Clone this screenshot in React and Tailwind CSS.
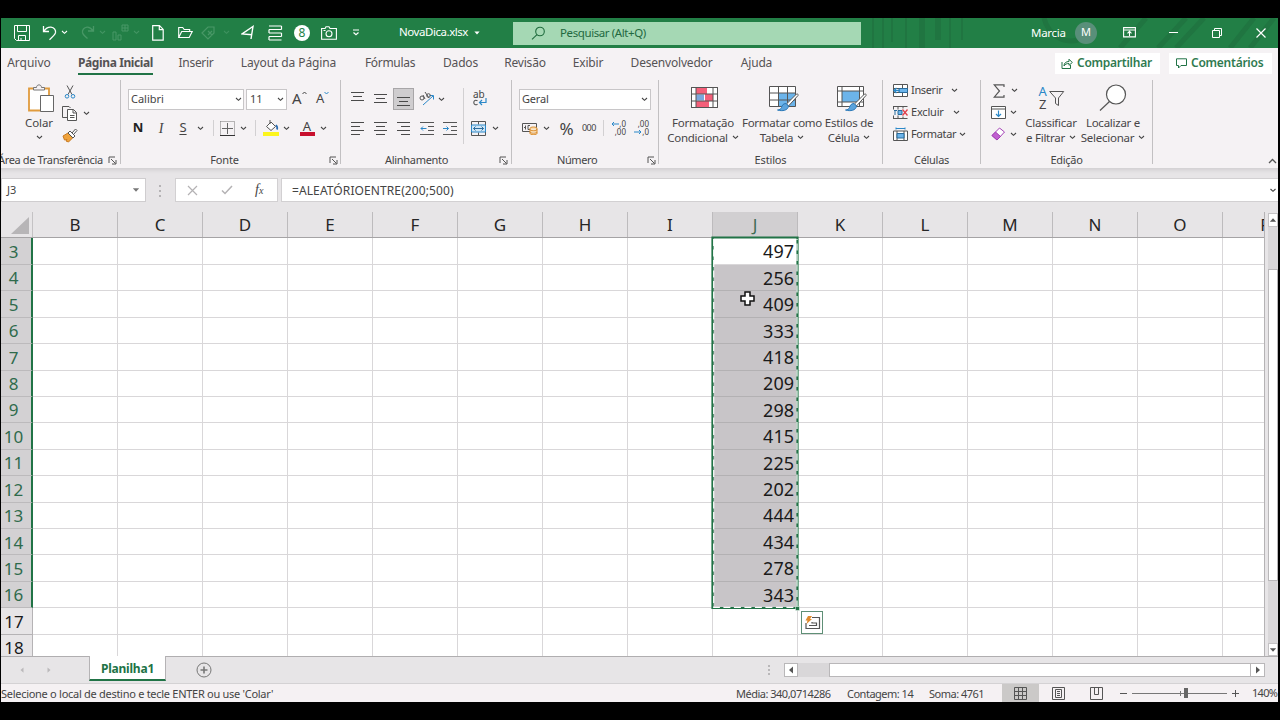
import React from "react";

const Chev = ({ className = "", w = 7, color = "#444" }) => (
  <svg width={w} height="5" viewBox="0 0 7 5" fill="none" stroke={color} strokeWidth="1.1" className={"shrink-0 " + className}>
    <path d="M1 1l2.5 2.3L6 1" />
  </svg>
);

const Tri = ({ d, color = "#555", className = "" }) => (
  <svg width="8" height="8" viewBox="0 0 8 8" fill={color} className={"shrink-0 " + className}>
    <path d={d} />
  </svg>
);
const DOWN = "M0.5 2h7L4 6z";
const UP = "M0.5 6h7L4 2z";
const LEFT = "M6 0.5v7L2 4z";
const RIGHT = "M2 0.5v7L6 4z";

const Ic = ({ w = 16, h = 16, vw, vh, children, className = "", stroke = "#555", sw = 1 }) => (
  <svg width={w} height={h} viewBox={`0 0 ${vw || w} ${vh || h}`} fill="none" stroke={stroke} strokeWidth={sw} className={"shrink-0 " + className}>
    {children}
  </svg>
);

const Launcher = ({ className = "" }) => (
  <Ic w={9} h={9} className={className} stroke="#555">
    <path d="M1 7V1h6M3 3l4.500 4.500M8 4v4H4" />
  </Ic>
);

const VSep = ({ className = "" }) => <div className={"w-px shrink-0 bg-[#d2d0d2] " + className} />;
const GroupSep = () => <div className="h-[84px] w-px shrink-0 bg-[#c2c0c2]" />;

function TitleBar() {
  return (
    <div className="relative flex h-[30px] shrink-0 items-center overflow-hidden bg-[#227f46] pb-[1px]">
      <svg width="420" height="30" className="absolute right-0 top-0" fill="none" stroke="#1d6b3c" strokeOpacity="0.5">
        <path strokeWidth="2" d="M15 0v30M25 0v30M34 0v24M48 0v30M92 0v30M104 0v22" />
        <path strokeWidth="6" d="M64 0v30M80 0v22" />
        <path strokeWidth="5" d="M186 0c4 16 18 26 34 22M262 30l26-30M300 30l28-30M318 30l28-30M372 30l24-30M392 30l24-30" />
      </svg>
      <Ic className="ml-[13px]" stroke="#fff">
        <path d="M.5 .5h15v15H2.500L.5 13.500zM3.500 .5v6h9v-6M4.500 15.500v-5h7v5M7 13v2.500" />
      </Ic>
      <Ic w={15} h={16} className="ml-[12px]" stroke="#fff" sw={1.3}>
        <path d="M1.500 1v5.500H7M1.800 6.300C4 3 6.500 2 9 2.200c3.300.3 5 3 4.500 5.500-.5 2.200-2.500 4-6 7" />
      </Ic>
      <Chev color="#fff" className="ml-[4px]" />
      <Ic w={14} h={15} className="ml-[13px] opacity-30" stroke="#9fd0b0" sw={1.3}>
        <path d="M12.500 1v5H7M12.200 6C10 3 8 2 6 2.200 3 2.500 1 5 1.500 7.500c.5 2 2.500 4 5 6" />
      </Ic>
      <Chev color="#5aa377" className="ml-[4px] opacity-60" />
      <Ic w={17} h={17} className="ml-[6px] opacity-30" stroke="#9fd0b0">
        <path d="M1 8v8h3V8zM6 11v5h3v-5zM10 1h6v6h-6zM10 4h6M13 1v6" />
      </Ic>
      <Chev color="#5aa377" className="ml-[4px] opacity-60" />
      <Ic w={12} h={16} className="ml-[12px]" stroke="#fff" sw={1.2}>
        <path d="M.7 .7h6.800l3.700 3.700v10.800H.7zM7.300 .7v4h4" />
      </Ic>
      <Ic w={15} h={13} className="ml-[14px]" stroke="#fff" sw={1.1}>
        <path d="M.7 11.500V1.500h4l1.500 2h5.500v2M.7 11.500l3-6h10.500l-3 6z" />
      </Ic>
      <Ic w={15} h={14} className="ml-[8px] opacity-30" stroke="#9fd0b0" sw={1.2}>
        <path d="M1 7l6-6h6v6l-6 6zM7 5l4 4M11 5L7 9" />
      </Ic>
      <Chev color="#5aa377" className="ml-[7px] opacity-50" />
      <Ic w={14} h={15} className="ml-[11px]" stroke="#fff" sw={1.4}>
        <path d="M10 14l2-12.500L1 9l10 .8" />
      </Ic>
      <Ic w={16} h={16} className="ml-[12px]" stroke="#fff" sw={1.2}>
        <path d="M2 1h12.500M2 4.500h12.500M2 8h12.500M2 11.500h12.500M2 15h12.500M14.500 1v3.500M2 4.500V8M14.500 8v3.500M2 11.500V15" />
      </Ic>
      <div className="ml-[11px] flex size-[16px] shrink-0 items-center justify-center rounded-full bg-white text-[12px] leading-none text-[#227f46]">8</div>
      <Ic w={16} h={14} className="ml-[11px]" stroke="#fff" sw={1.1}>
        <path d="M.6 2.500h3.500L5 .8h3l1 1.700h6.400v10.700H.6zM2.500 4.500h2" />
        <circle cx="8" cy="7.700" r="3" />
      </Ic>
      <Ic w={8} h={7} className="ml-[15px]" stroke="#fff" sw={1.2}>
        <path d="M1 1h6M1.500 3.500L4 5.700l2.500-2.200" />
      </Ic>
      <div className="ml-[39px] w-[70px] shrink-0 whitespace-nowrap pb-[2px] text-[11.5px] tracking-[-0.45px] text-white">NovaDica.xlsx</div>
      <Tri d={DOWN} color="#fff" className="ml-[4px] scale-75" />
      <div className="ml-[32px] mt-[1px] flex h-[23px] w-[348px] shrink-0 items-center bg-[#a5d8b4]">
        <Ic w={15} h={14} className="ml-[18px]" stroke="#1f6b3d" sw={1.1}>
          <circle cx="9" cy="5.500" r="4.300" />
          <path d="M6 8.700L1 13.300" />
        </Ic>
        <span className="ml-[14px] whitespace-nowrap text-[11.5px] tracking-[-0.4px] text-[#23693f]">Pesquisar (Alt+Q)</span>
      </div>
      <div className="relative ml-[170px] w-[35px] shrink-0 whitespace-nowrap text-[11.5px] tracking-[-0.3px] text-white">Marcia</div>
      <div className="relative ml-[9px] flex size-[22px] shrink-0 items-center justify-center rounded-full bg-[#598f7a] text-[11px] text-white">M</div>
      <Ic w={13} h={11} className="relative ml-[26px]" stroke="#fff" sw={1.1}>
        <path d="M.6 .6h11.800v9.300H.6zM.6 3h11.800M6.500 9V4.500M4.500 6.300l2-2 2 2" />
      </Ic>
      <div className="relative ml-[33px] h-px w-[9px] bg-white" />
      <Ic w={10} h={10} className="relative ml-[34px]" stroke="#fff">
        <path d="M.5 2.500h7v7h-7zM2.500 2.500v-2h7v7h-2" />
      </Ic>
      <Ic w={10} h={10} className="relative ml-[34px]" stroke="#fff" sw={1.2}>
        <path d="M.5 .5l9 9M9.500 .5l-9 9" />
      </Ic>
    </div>
  );
}

function MenuTabs() {
  const tab = "flex shrink-0 justify-center whitespace-nowrap";
  return (
    <div className="flex h-[32px] shrink-0 items-center bg-[#f5f2f4] pb-[2px] text-[12px] leading-[16px] text-[#555355]">
      <div className={tab + " ml-[7px] w-[42px]"}>Arquivo</div>
      <div className={tab + " relative ml-[28px] w-[75px] font-bold tracking-[-0.4px] after:absolute after:inset-x-0 after:top-[18px] after:h-[2px] after:bg-[#217346]"}>Página Inicial</div>
      <div className={tab + " ml-[26px] w-[34px] tracking-[-0.3px]"}>Inserir</div>
      <div className={tab + " ml-[28px] w-[95px] tracking-[-0.1px]"}>Layout da Página</div>
      <div className={tab + " ml-[29px] w-[50px] tracking-[-0.3px]"}>Fórmulas</div>
      <div className={tab + " ml-[28px] w-[35px] tracking-[-0.2px]"}>Dados</div>
      <div className={tab + " ml-[26px] w-[42px] tracking-[-0.2px]"}>Revisão</div>
      <div className={tab + " ml-[27px] w-[30px] tracking-[-0.2px]"}>Exibir</div>
      <div className={tab + " ml-[27px] w-[83px] tracking-[-0.2px]"}>Desenvolvedor</div>
      <div className={tab + " ml-[28px] w-[31px] tracking-[-0.2px]"}>Ajuda</div>
      <div className="ml-[283px] flex h-[21px] w-[105px] shrink-0 items-center bg-white font-semibold text-[#2f7a50]">
        <Ic w={12} h={11} className="ml-[6px]" stroke="#217346">
          <path d="M1 4v6.500h8.500V7M3 8c0-3 2-4.500 5-4.500V1.200L11.300 4.500 8 7.300V5.500C5.500 5.500 4 6.300 3 8z" />
        </Ic>
        <span className="ml-[4px] whitespace-nowrap tracking-[-0.25px]">Compartilhar</span>
      </div>
      <div className="ml-[9px] flex h-[21px] w-[103px] shrink-0 items-center bg-white font-semibold text-[#2f7a50]">
        <Ic w={11} h={11} className="ml-[7px]" stroke="#217346">
          <path d="M.5 .8h10v6.700H5L2.500 10V7.500h-2z" />
        </Ic>
        <span className="ml-[4px] whitespace-nowrap tracking-[-0.25px]">Comentários</span>
      </div>
    </div>
  );
}

const Lines = ({ rows, w = 14, h = 14 }) => (
  <Ic w={w} h={h} stroke="#4a4a4a">
    {rows.map(([x, y, l], i) => (
      <path key={i} d={`M${x} ${y + 0.5}h${l}`} />
    ))}
  </Ic>
);

const Brush = () => (
  <g>
    <path d="M27.500 8L17.500 18l2 2L29 9.500c.5-1-.5-2-1.500-1.500z" fill="#fff" stroke="#555" />
    <path d="M17 17.500c-3 0-4 2-4.500 4-.5 1.500-2 2.500-4 2.500 5 1.500 10.500.5 11-4z" fill="#5ba3dc" stroke="#2b79b8" />
  </g>
);

function BigButton({ className, icon, a, b }) {
  return (
    <div className={"flex shrink-0 flex-col items-center whitespace-nowrap text-[11.5px] leading-[15px] tracking-[-0.25px] text-[#484648] " + className}>
      <div className="flex h-[35px] shrink-0 items-center justify-center">{icon}</div>
      <div>{a}</div>
      <div className="flex items-center">
        {b}
        <Chev className="ml-[4px]" />
      </div>
    </div>
  );
}

const label = "flex h-[16px] items-center justify-center whitespace-nowrap text-[11px] leading-[16px] tracking-[-0.15px] text-[#444]";

function Ribbon() {
  return (
    <div className="flex h-[88px] shrink-0 bg-[#f5f2f4] text-[12px] text-[#444]">
      {/* Clipboard */}
      <div className="w-[119px] shrink-0 overflow-hidden">
        <div className="flex h-[72px]">
          <div className="ml-[18px] flex w-[40px] shrink-0 flex-col items-center">
            <Ic w={28} h={30} className="ml-[3px] mt-[4px]">
              <path d="M2 4.500h20v22H2z" fill="#fff" stroke="#e09b3d" strokeWidth="1.800" />
              <path d="M6.500 6V3.500h3C9.500 0 14.500 0 14.500 3.500h3V6z" fill="#f5f2f4" stroke="#777" />
              <path d="M13.500 11.500h13v16h-13z" fill="#fff" stroke="#666" />
            </Ic>
            <div className="mt-[1px] text-[11.5px] leading-[16px] tracking-[-0.1px]">Colar</div>
            <Chev className="mt-[4px]" />
          </div>
          <div className="flex flex-col">
            <div className="flex h-[22px] items-center">
              <Ic w={12} h={14} className="ml-[5px] mt-[2px]">
                <path d="M3 .5l5 9M9 .5l-5 9" />
                <circle cx="3" cy="11.300" r="1.800" stroke="#2b88c8" />
                <circle cx="9" cy="11.300" r="1.800" stroke="#2b88c8" />
              </Ic>
            </div>
            <div className="flex h-[22px] items-center">
              <Ic w={16} h={15} className="ml-[3px]">
                <path d="M5 11.500H.5V.5H7l1.500 1.500" />
                <path d="M5.500 3.500h6l3 3v8h-9zM11 3.500v3.500h3.500M8 9.500h4.500M8 11.500h4.500" fill="#fff" />
              </Ic>
              <Chev className="ml-[5px]" />
            </div>
            <div className="flex h-[22px] items-center">
              <Ic w={16} h={15} className="ml-[3px]">
                <path d="M1 8l5-3 5 4.500-4.500 4.500L4 13l1-1.500-2.500.5z" fill="#f0a33c" stroke="#c97a20" />
                <path d="M6 5l2-2 5 5-2 2zM10 5l3.500-4 1.500 1.500-3.500 4" fill="#fff" />
              </Ic>
            </div>
          </div>
        </div>
        <div className={label + " justify-start"}>
          <span className="ml-[-3px] w-[104px] shrink-0 tracking-[-0.35px]">Área de Transferência</span>
          <Launcher className="ml-[6px]" />
        </div>
      </div>
      <GroupSep />

      {/* Font */}
      <div className="w-[219px] shrink-0">
        <div className="flex h-[72px] flex-col">
          <div className="mt-[8px] flex h-[22px] items-center">
            <div className="ml-[7px] flex h-[21px] w-[116px] shrink-0 items-center justify-between border border-[#c8c6c8] bg-white pl-[2px] pr-[1px] text-[11px]">
              Calibri <Chev />
            </div>
            <div className="ml-[2px] flex h-[21px] w-[41px] shrink-0 items-center justify-between border border-[#c8c6c8] bg-white pl-[3px] pr-[2px] text-[11px]">
              11 <Chev />
            </div>
            <div className="ml-[5px] mt-[-3px] flex w-[16px] items-start text-[15px] leading-[18px]">
              A<Ic w={5} h={4} className="mt-[2px]" stroke="#444"><path d="M.5 3l2-2 2 2" /></Ic>
            </div>
            <div className="ml-[8px] mt-[-3px] flex w-[16px] items-start text-[13px] leading-[18px]">
              A<Ic w={5} h={4} className="mt-[2px]" stroke="#2b88c8"><path d="M.5 1l2 2 2-2" /></Ic>
            </div>
          </div>
          <div className="mt-[7px] flex h-[22px] items-center text-[13px]">
            <div className="ml-[9px] w-[16px] text-center font-bold text-[#222]">N</div>
            <div className="ml-[7px] w-[16px] text-center font-['Liberation_Serif',serif] text-[14px] italic">I</div>
            <div className="ml-[6px] w-[16px] text-center underline underline-offset-2">S</div>
            <Chev className="ml-[6px]" />
            <VSep className="ml-[9px] h-[16px]" />
            <Ic w={15} h={15} className="ml-[6px]" stroke="#777">
              <path d="M.5 .5h14v14M.5 .5v14" strokeDasharray="1 1" />
              <path d="M7.500 2v11M2 7.500h11" stroke="#666" />
              <path d="M0 14.500h15" stroke="#333" />
            </Ic>
            <Chev className="ml-[5px]" />
            <VSep className="ml-[8px] h-[16px]" />
            <Ic w={16} h={16} className="ml-[7px]">
              <path d="M3.500 6.500L8 2l4.500 4.500L8 10.500zM7 0v4" fill="#fff" />
              <path d="M13 5c1.500 2 1.500 3.500.8 4.500" stroke="#2b6cb0" strokeWidth="1.800" />
              <path d="M0 12h16v4H0z" fill="#fcf51c" stroke="none" />
            </Ic>
            <Chev className="ml-[4px]" />
            <div className="ml-[9px] flex w-[16px] flex-col items-center">
              <span className="text-[13px] leading-[12px]">A</span>
              <span className="h-[4px] w-[15px] bg-[#c8102e]" />
            </div>
            <Chev className="ml-[5px]" />
          </div>
        </div>
        <div className={label}>
          <span className="ml-[86px] w-[30px] text-center">Fonte</span>
          <Launcher className="ml-[89px]" />
        </div>
      </div>
      <GroupSep />

      {/* Alignment */}
      <div className="w-[170px] shrink-0">
        <div className="flex h-[72px]">
          <div className="flex w-[122px] shrink-0 flex-col">
            <div className="mt-[8px] flex h-[22px] items-center">
              <div className="ml-[10px] mt-[-4px] flex"><Lines h={16} rows={[[0, 3, 13], [2, 7, 9], [0, 11, 13]]} /></div>
              <div className="ml-[9px] mt-[-4px] flex"><Lines h={16} rows={[[0, 5, 13], [2, 9, 9], [0, 13, 13]]} /></div>
              <div className="ml-[5px] flex h-[22px] w-[21px] shrink-0 items-center justify-center border border-[#a8a6a8] bg-[#cfcdcf]">
                <Lines h={16} rows={[[0, 6, 13], [2, 10, 9], [0, 14, 13]]} />
              </div>
              <Ic w={16} h={16} className="ml-[5px]">
                <path d="M4 14L14 5M10.500 4.500H14.500V8.500" stroke="#2b88c8" />
                <circle cx="3" cy="7" r="2" />
                <path d="M4 4l2 4M6 1l4 6" />
                <circle cx="9.500" cy="4.500" r="1.800" />
              </Ic>
              <Chev className="ml-[3px]" />
            </div>
            <div className="mt-[7px] flex h-[22px] items-center gap-[9px] pl-[10px]">
              <Lines rows={[[0, 1, 13], [0, 5, 9], [0, 9, 13], [0, 13, 9]]} />
              <Lines rows={[[0, 1, 13], [2, 5, 9], [0, 9, 13], [2, 13, 9]]} />
              <Lines rows={[[0, 1, 13], [4, 5, 9], [0, 9, 13], [4, 13, 9]]} />
              <Ic w={14} h={14}>
                <path d="M0 1.500h14M8 5.500h6M8 9.500h6M0 13.500h14" />
                <path d="M6.500 7.500H1M3 5.500l-2 2 2 2" stroke="#2b88c8" />
              </Ic>
              <Ic w={14} h={14}>
                <path d="M0 1.500h14M8 5.500h6M8 9.500h6M0 13.500h14" />
                <path d="M0 7.500h5.500M3.500 5.500l2 2-2 2" stroke="#2b88c8" />
              </Ic>
            </div>
          </div>
          <VSep className="mt-[8px] h-[56px]" />
          <div className="flex flex-col">
            <div className="mt-[8px] flex h-[22px] items-center">
              <div className="ml-[9px] mt-[-2px] w-[15px] text-[10px] leading-[8px]">
                <div className="h-[8px]">ab</div>
                <div className="flex h-[8px] items-center">
                  <Ic w={5} h={8} sw={1.1}><path d="M4.500 2.800C2.500 1.500.8 2.500.8 4.500s1.700 3 3.700 1.700" /></Ic>
                  <Ic w={9} h={8} stroke="#2b88c8" sw={1.2}><path d="M8 0v4.500H1.500M4 2L1.500 4.500 4 7" /></Ic>
                </div>
              </div>
            </div>
            <div className="mt-[7px] flex h-[22px] items-center">
              <Ic w={15} h={15} className="ml-[7px]">
                <path d="M.5 .5h14v14H.5zM7.500 .5v3M7.500 11.500v3" />
                <path d="M.5 4h14v7H.5z" fill="#cfe6f7" stroke="#2b88c8" />
                <path d="M2.500 7.500h10M4.500 5.500l-2 2 2 2M10.500 5.500l2 2-2 2" stroke="#2b6c9c" />
              </Ic>
              <Chev className="ml-[6px]" />
            </div>
          </div>
        </div>
        <div className={label + " justify-start"}>
          <span className="ml-[44px] w-[63px] text-center tracking-[-0.3px]">Alinhamento</span>
          <Launcher className="ml-[51px]" />
        </div>
      </div>
      <GroupSep />

      {/* Number */}
      <div className="w-[146px] shrink-0">
        <div className="flex h-[72px] flex-col">
          <div className="mt-[8px] flex h-[22px] items-center">
            <div className="ml-[7px] flex h-[21px] w-[132px] shrink-0 items-center justify-between border border-[#c8c6c8] bg-white pl-[2px] pr-[2px] text-[11px] tracking-[-0.2px]">
              Geral <Chev />
            </div>
          </div>
          <div className="mt-[7px] flex h-[22px] items-center">
            <Ic w={16} h={14} className="ml-[10px]">
              <path d="M.5 2.500h14v8H.5z" />
              <path d="M3.500 4.500v4M2 6.500h1M8 4.500H6v4h2" />
              <path d="M8 7.500c0-2 7-2 7 0v5c0 1.500-7 1.500-7 0zM8 8.500c0 1.500 7 1.500 7 0M8 11c0 1.500 7 1.500 7 0" fill="#fbdcae" stroke="#d98a28" />
            </Ic>
            <Chev className="ml-[5px]" />
            <div className="ml-[8px] w-[16px] text-center text-[17px] leading-none tracking-[-1px]">%</div>
            <div className="ml-[6px] w-[18px] text-center text-[9px] tracking-[-0.4px]">000</div>
            <VSep className="ml-[5px] h-[16px]" />
            <div className="ml-[6px] flex w-[16px] flex-col items-end text-[8px] leading-[8px]">
              <div className="flex h-[8px] items-center">
                <Ic w={8} h={6} stroke="#2b88c8"><path d="M8 3H1M3 1L1 3l2 2" /></Ic>,0
              </div>
              <div className="h-[8px]">,00</div>
            </div>
            <div className="ml-[7px] flex w-[16px] flex-col items-end text-[8px] leading-[8px]">
              <div className="h-[8px]">,00</div>
              <div className="flex h-[8px] items-center">
                <Ic w={8} h={6} stroke="#2b88c8"><path d="M0 3h7M5 1l2 2-2 2" /></Ic>,0
              </div>
            </div>
          </div>
        </div>
        <div className={label + " justify-start"}>
          <span className="ml-[45px] w-[40px] text-center tracking-[-0.4px]">Número</span>
          <Launcher className="ml-[50px]" />
        </div>
      </div>
      <GroupSep />

      {/* Styles */}
      <div className="w-[223px] shrink-0">
        <div className="flex h-[72px]">
          <BigButton
            className="ml-[9px] w-[70px]"
            a="Formatação"
            b="Condicional"
            icon={
              <Ic w={28} h={22} className="ml-[3px]">
                <path d="M.5 .5h26v20H.5z" fill="#fff" />
                <path d="M5 .5h11v6.500H5zM14 7h8v7h-8zM5 14h13v6.500H5z" fill="#f4607a" stroke="none" />
                <path d="M5 7.500h8v6H5z" fill="#7ba7dd" stroke="none" />
                <path d="M.5 .5h26v20H.5zM.5 7h26M.5 14h26M5 .5v20M22 .5v20" />
              </Ic>
            }
          />
          <BigButton
            className="ml-[5px] w-[78px] tracking-[-0.3px]"
            a="Formatar como"
            b="Tabela"
            icon={
              <Ic w={30} h={26} className="ml-[4px] mt-[3px]">
                <path d="M.5 .5h26v20H.5z" fill="#fff" stroke="none" />
                <path d="M9.500 7h17v13.500h-17z" fill="#6cb4ea" stroke="none" />
                <path d="M.5 .5h26v20H.5zM.5 7h26M.5 14h26M9.500 .5v20M18.500 .5v20" />
                <Brush />
              </Ic>
            }
          />
          <BigButton
            className="ml-[5px] w-[46px]"
            a="Estilos de"
            b="Célula"
            icon={
              <Ic w={30} h={26} className="ml-[5px] mt-[3px]">
                <path d="M.5 .5h26v20H.5z" fill="#fff" stroke="none" />
                <path d="M5 5h18v11H5z" fill="#6cb4ea" stroke="none" />
                <path d="M.5 .5h26v20H.5zM.5 5h26M.5 16h26M5 .5v20M22.500 .5v20" />
                <Brush />
              </Ic>
            }
          />
        </div>
        <div className={label}>
          <span>Estilos</span>
        </div>
      </div>
      <GroupSep />

      {/* Cells */}
      <div className="w-[97px] shrink-0">
        <div className="mt-[-1px] flex h-[73px] flex-col text-[11px] tracking-[-0.2px]">
          <div className="flex h-[22px] items-center">
            <Ic w={15} h={13} className="ml-[10px]">
              <path d="M.5 .5h14v12H.5zM.5 4.500h14M.5 8.500h14M9.500 .5v12" fill="#fff" />
              <path d="M6 4.500h8.500v4H6z" fill="#6cb4ea" stroke="#2b6c9c" />
              <path d="M7 6.500H1M3.500 4L1 6.500 3.500 9" stroke="#2b88c8" strokeWidth="1.300" />
            </Ic>
            <span className="ml-[3px] w-[32px] whitespace-nowrap tracking-[-0.35px]">Inserir</span>
            <Chev className="ml-[8px]" />
          </div>
          <div className="flex h-[22px] items-center">
            <Ic w={15} h={13} className="ml-[10px]">
              <path d="M0 .5h14.500M0 12.500h14.500M.5 .5v3M.5 9.500v3M5 .5v3M5 9.500v3M10 .5v2M10 10.500v2" />
              <path d="M1 4.500h3M2 4v5M5 4.500h4v4H5z" fill="#6cb4ea" stroke="#2b6c9c" />
              <path d="M9.500 3.500l5 6M14.500 3.500l-5 6" stroke="#e0404c" strokeWidth="1.300" />
            </Ic>
            <span className="ml-[3px] w-[34px] whitespace-nowrap">Excluir</span>
            <Chev className="ml-[8px]" />
          </div>
          <div className="flex h-[22px] items-center">
            <Ic w={15} h={14} className="ml-[10px]">
              <path d="M3 .5v2M12 .5v2M3 1.500h9" stroke="#2b88c8" />
              <path d="M.5 4h14v9.500H.5zM4 4v9.500M11 4v9.500" fill="#fff" />
              <path d="M4 6.500h7v4.500H4z" fill="#6cb4ea" stroke="#2b6c9c" />
            </Ic>
            <span className="ml-[3px] w-[45px] whitespace-nowrap tracking-[-0.35px]">Formatar</span>
            <Chev className="ml-[3px]" />
          </div>
        </div>
        <div className={label}>
          <span className="tracking-[-0.3px]">Células</span>
        </div>
      </div>
      <GroupSep />

      {/* Editing */}
      <div className="w-[171px] shrink-0">
        <div className="flex h-[72px]">
          <div className="flex w-[40px] shrink-0 flex-col">
            <div className="flex h-[21px] items-center">
              <Ic w={12} h={14} className="ml-[12px]" sw={1.2}><path d="M11 3V.8H1.200L6.500 7l-5.300 6.200H11V11" /></Ic>
              <Chev className="ml-[6px]" />
            </div>
            <div className="flex h-[22px] items-center">
              <Ic w={15} h={13} className="ml-[10px]">
                <path d="M.5 .5h14v12H.5zM.5 3h14" fill="#fff" />
                <path d="M7.500 4.500v6M5 8l2.500 2.500L10 8" stroke="#2b88c8" strokeWidth="1.200" />
              </Ic>
              <Chev className="ml-[4px]" />
            </div>
            <div className="flex h-[22px] items-center">
              <Ic w={15} h={14} className="ml-[10px]">
                <path d="M1 8.500L8.500 1l5 4-7.500 8z" fill="#fff" stroke="#a33fb5" />
                <path d="M1 8.500l3.500-3.500 5 4.500L6 13z" fill="#c060d0" stroke="#a33fb5" />
              </Ic>
              <Chev className="ml-[4px]" />
            </div>
          </div>
          <BigButton
            className="ml-[4px] w-[52px]"
            a="Classificar"
            b="e Filtrar"
            icon={
              <div className="flex items-start">
                <div className="flex w-[10px] flex-col items-center text-[13px] leading-[13px]">
                  <span className="text-[#2b88c8]">A</span>
                  <span>Z</span>
                </div>
                <Ic w={16} h={17} className="ml-[1px] mt-[5px]"><path d="M.7 1.500h14L9.500 8v7.500l-3-2V8z" /></Ic>
              </div>
            }
          />
          <BigButton
            className="ml-[6px] w-[60px]"
            a="Localizar e"
            b="Selecionar"
            icon={
              <Ic w={28} h={28} sw={1.2}>
                <circle cx="17" cy="10.500" r="9.500" fill="#fff" />
                <path d="M10.500 17.500L1 26.500" />
              </Ic>
            }
          />
        </div>
        <div className={label}>
          <span className="tracking-[-0.3px]">Edição</span>
        </div>
      </div>
      <GroupSep />
      <div className="flex grow items-end justify-end pb-[4px] pr-[1px]">
        <Ic w={9} h={6} sw={1.3}><path d="M1 5l3.500-3.500L8 5" /></Ic>
      </div>
    </div>
  );
}

function FormulaBar() {
  return (
    <div className="flex h-[44px] shrink-0 items-start bg-[#e7e5e7] shadow-[inset_0_4px_4px_-2px_#cfcdcf]">
      <div className="mt-[10px] flex h-[24px] w-[145px] shrink-0 items-center justify-between border border-[#cfcdcf] bg-white pl-[5px] pr-[5px] text-[11px] text-[#444]">
        J3 <Tri d={DOWN} color="#777" className="scale-90" />
      </div>
      <div className="ml-[13px] mt-[17px] flex w-[2px] flex-col gap-[3px]">
        <i className="size-[2px] bg-[#b5b3b5]" />
        <i className="size-[2px] bg-[#b5b3b5]" />
        <i className="size-[2px] bg-[#b5b3b5]" />
      </div>
      <div className="ml-[14px] mt-[10px] flex h-[24px] w-[103px] shrink-0 items-center border border-[#d2d0d2] bg-white">
        <Ic w={11} h={11} className="ml-[11px]" stroke="#b4b2b4" sw={1.2}><path d="M1 1l9 9M10 1l-9 9" /></Ic>
        <Ic w={12} h={10} className="ml-[23px]" stroke="#b4b2b4" sw={1.5}><path d="M1 5.500L4 8.500 11 1" /></Ic>
        <span className="ml-[22px] font-['Liberation_Serif',serif] text-[14px] italic leading-none text-[#444]">
          f<span className="text-[10px]">x</span>
        </span>
      </div>
      <div className="ml-[3px] mt-[10px] flex h-[24px] grow items-center justify-between border border-r-0 border-[#d2d0d2] bg-white pl-[10px] text-[12px] text-[#444]">
        <span className="whitespace-nowrap pt-[1px] tracking-[0.1px]">=ALEATÓRIOENTRE(200;500)</span>
        <Chev className="mr-[1px]" w={8} />
      </div>
    </div>
  );
}

const COLS = ["B", "C", "D", "E", "F", "G", "H", "I", "J", "K", "L", "M", "N", "O"];
const VALUES = [497, 256, 409, 333, 418, 209, 298, 415, 225, 202, 444, 434, 278, 343];
const ROWS = Array.from({ length: 16 }, (_, i) => i + 3);

function Sheet() {
  return (
    <div className="flex h-[444px] shrink-0 bg-[#e7e5e7]">
      <div className="relative h-[444px] w-[1264px] shrink-0 overflow-hidden border-r border-[#b5b3b5]">
        <div className="flex h-[26px] border-b border-[#a5a3a5] text-[17px] text-[#262626]">
          <div className="flex w-[32px] shrink-0 items-end justify-end border-r border-[#c4c2c4] pb-[3px] pr-[3px]">
            <svg width="18" height="17" fill="#b7b5b7"><path d="M18 0v17H0z" /></svg>
          </div>
          {COLS.map((c) => (
            <div
              key={c}
              className={"flex w-[85px] shrink-0 items-center justify-center border-r border-[#bdbbbd] " + (c === "J" ? "bg-[#d1cfd1] text-[#3f6b54]" : "")}
            >
              {c}
            </div>
          ))}
          <div className="flex w-[85px] shrink-0 items-center justify-center">P</div>
        </div>
        {ROWS.map((r, i) => (
          <div key={r} className={"flex text-[18px] text-[#1a1a1a] " + (i === 0 ? "h-[27px]" : "h-[26.42px]")}>
            <div
              className={
                "flex w-[32px] shrink-0 items-center justify-center border-b pr-[5px] pt-[1px] text-[17px] " +
                (i < 14 ? "border-b-[#bcbabc] border-r-2 border-r-[#217346] bg-[#d3d1d3] pr-[4px] text-[#2f6b4c]" : "border-b-[#b5b3b5] border-r border-r-[#b5b3b5]")
              }
            >
              {r}
            </div>
            {COLS.map((c) => (
              <div
                key={c}
                className={
                  "flex w-[85px] shrink-0 items-center justify-end border-b border-r border-[#d9d7d9] pr-[3px] pt-[1px] " +
                  (c === "J" && i > 0 && i < 14 ? "border-b-[#b3b1b3] bg-[#c8c5c8]" : "bg-white")
                }
              >
                {c === "J" && i < 14 ? VALUES[i] : ""}
              </div>
            ))}
            <div className="w-[85px] shrink-0 border-b border-[#d9d7d9] bg-white" />
          </div>
        ))}
        <svg width="90" height="376" className="absolute left-[710px] top-[24px]" fill="none">
          <path d="M1.500 1.500h85v370.500h-85z" stroke="#217346" strokeWidth="2.200" />
          <path d="M2.700 3v368.300h83.300V3" stroke="#fff" strokeWidth="1.200" strokeDasharray="7 3.500" />
          <path d="M84.500 370.500h4v4h-4z" fill="#217346" stroke="#fff" strokeWidth=".5" />
        </svg>
        <svg width="15" height="15" viewBox="0 0 15 15" className="absolute left-[739px] top-[79px]">
          <path d="M5 1h5v4h4v5h-4v4H5v-4H1V5h4z" fill="#fff" stroke="#111" strokeWidth="1.500" />
        </svg>
        <div className="absolute left-[800px] top-[399px] flex h-[23px] w-[22px] items-center justify-center border border-[#5f8f76] bg-white">
          <Ic w={17} h={15}>
            <path d="M8 2.500h7.500v11H2V8M5 10.500h7.500V8H8v-1" stroke="#555" strokeWidth="1.200" />
            <path d="M4 1h4L6 4h2L2.500 9l1-3.500H1.500z" fill="#e08a2c" stroke="none" />
          </Ic>
        </div>
      </div>
      <div className="flex w-[13px] shrink-0 flex-col items-end">
        <div className="mt-[1px] flex h-[14px] w-[10px] shrink-0 items-center justify-center border border-[#c4c2c4] bg-white"><Tri d={UP} className="scale-90" /></div>
        <div className="h-[42px] w-[10px] shrink-0 bg-[#d9d7d9]" />
        <div className="h-[312px] w-[10px] shrink-0 border border-[#b9b7b9] bg-white" />
        <div className="w-[10px] grow bg-[#d9d7d9]" />
        <div className="flex h-[13px] w-[10px] shrink-0 items-center justify-center border border-[#c4c2c4] bg-white"><Tri d={DOWN} className="scale-90" /></div>
      </div>
    </div>
  );
}

function SheetTabs() {
  return (
    <div className="flex h-[27px] shrink-0 border-t border-[#b0aeb0] bg-[#e7e5e7]">
      <div className="flex w-[88px] shrink-0 items-center">
        <Tri d={LEFT} color="#bbb9bb" className="ml-[17px] scale-75" />
        <Tri d={RIGHT} color="#bbb9bb" className="ml-[19px] scale-75" />
      </div>
      <div className="mt-[-1px] flex h-[25px] w-[77px] shrink-0 items-center justify-center border-x border-b-2 border-x-[#b5b3b5] border-b-[#217346] bg-white pt-[3px] text-[12px] font-bold tracking-[-0.2px] text-[#217346]">Planilha1</div>
      <Ic w={16} h={16} className="ml-[30px] mt-[5px]" stroke="#777">
        <circle cx="8" cy="8" r="7" />
        <path d="M4.500 8h7M8 4.500v7" strokeWidth="1.600" />
      </Ic>
      <div className="ml-[556px] mt-[8px] flex w-[2px] shrink-0 flex-col gap-[2px]">
        <i className="size-[2px] bg-[#b9b7b9]" />
        <i className="size-[2px] bg-[#b9b7b9]" />
        <i className="size-[2px] bg-[#b9b7b9]" />
      </div>
      <div className="ml-[14px] mt-[6px] flex h-[14px] w-[481px] shrink-0 bg-[#d9d7d9]">
        <div className="flex w-[14px] items-center justify-center border border-[#b9b7b9] bg-white"><Tri d={LEFT} /></div>
        <div className="ml-[31px] grow border border-[#b9b7b9] bg-white" />
        <div className="flex w-[14px] items-center justify-center border border-l-0 border-[#b9b7b9] bg-white"><Tri d={RIGHT} /></div>
      </div>
    </div>
  );
}

function StatusBar() {
  return (
    <div className="flex h-[19px] shrink-0 items-center overflow-hidden whitespace-nowrap border-t border-[#d4d2d4] bg-[#f5f1f3] text-[11px] tracking-[-0.2px] text-[#444]">
      <div className="w-[735px] shrink-0 pt-[2px] tracking-[-0.28px]">Selecione o local de destino e tecle ENTER ou use 'Colar'</div>
      <div className="w-[111px] shrink-0 pt-[2px] tracking-[-0.5px]">Média: 340,0714286</div>
      <div className="w-[82px] shrink-0 pt-[2px] tracking-[-0.5px]">Contagem: 14</div>
      <div className="w-[73px] shrink-0 pt-[2px] tracking-[-0.5px]">Soma: 4761</div>
      <div className="flex h-full w-[37px] shrink-0 items-center justify-center bg-[#cbc9c8]">
        <Ic w={13} h={13}><path d="M.5 .5h12v12H.5zM.5 4.500h12M.5 8.500h12M4.500 .5v12M8.500 .5v12" /></Ic>
      </div>
      <Ic w={13} h={13} className="ml-[13px]"><path d="M.5 .5h12v12H.5zM3.500 2.500h6v8h-6zM5 4.500h3M5 6.500h3M5 8.500h3" /></Ic>
      <Ic w={13} h={13} className="ml-[25px]"><path d="M.5 .5h12v12H.5zM4.500 .5v7M4.500 7.500h4v-7" /></Ic>
      <div className="ml-[17px] h-px w-[7px] shrink-0 bg-[#555]" />
      <svg width="96" height="12" className="ml-[5px] shrink-0" stroke="#777">
        <path d="M0 6.500h95M48.500 4v5" />
        <path d="M52 1h4v10h-4z" fill="#666" stroke="none" />
      </svg>
      <Ic w={7} h={7} className="ml-[4px]" stroke="#555"><path d="M0 3.500h7M3.500 0v7" /></Ic>
      <span className="ml-[13px] tracking-[-0.7px]">140%</span>
    </div>
  );
}

export default function App() {
  return (
    <div className="h-[720px] w-[1280px] overflow-hidden bg-black pl-px pr-[2px] pt-[18px] font-['Noto_Sans','Open_Sans',sans-serif]">
      <div className="flex h-[684px] w-[1277px] flex-col overflow-hidden">
        <TitleBar />
        <MenuTabs />
        <Ribbon />
        <FormulaBar />
        <Sheet />
        <SheetTabs />
        <StatusBar />
      </div>
    </div>
  );
}
